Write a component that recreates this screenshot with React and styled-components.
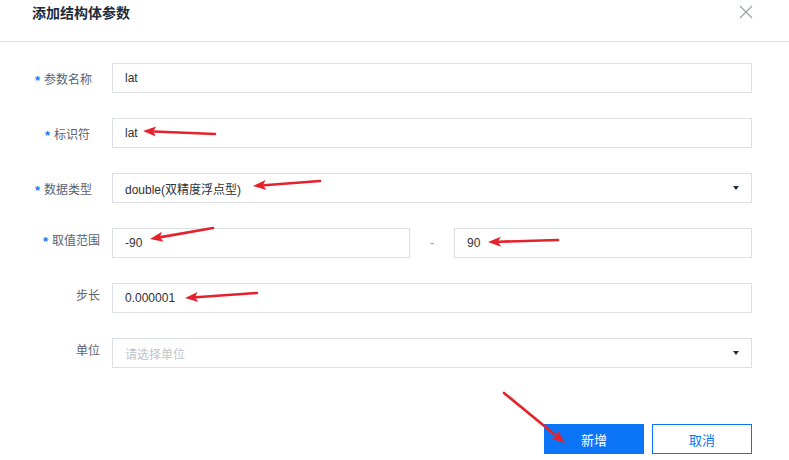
import React from 'react'
import styled, { createGlobalStyle } from 'styled-components'

const Global = createGlobalStyle`
  html, body {
    margin: 0;
    padding: 0;
    background: #fff;
  }
  body {
    font-family: "Liberation Sans", "Noto Sans CJK SC", sans-serif;
  }
`

const Dialog = styled.div`
  position: relative;
  width: 789px;
  height: 460px;
  background: #fff;
  overflow: hidden;
`

const Header = styled.div`
  height: 41px;
  border-bottom: 1px solid #dcdfe6;
  display: flex;
  align-items: flex-start;
  justify-content: space-between;
  padding: 0 37px 0 32px;
`

const Title = styled.div`
  font-size: 14px;
  font-weight: bold;
  color: #1f2d3d;
  line-height: 14px;
  margin-top: 6px;
`

const Close = styled.div`
  width: 14px;
  height: 14px;
  margin-top: 5px;
  margin-right: -1px;
`

const Form = styled.div`
  padding: 21px 37px 0 0;
  display: flex;
  flex-direction: column;
  gap: 25px;
`

const Row = styled.div`
  display: flex;
  align-items: center;
  height: 30px;
`

const Label = styled.div`
  width: 112px;
  box-sizing: border-box;
  padding-right: ${p => p.$pr}px;
  padding-bottom: ${p => p.$up}px;
  display: flex;
  justify-content: flex-end;
  align-items: center;
  font-size: 12px;
  color: #5b6270;
  flex-shrink: 0;
`

const Star = styled.span`
  color: #1677ff;
  font-size: 13px;
  font-weight: bold;
  margin-right: 4px;
  position: relative;
  top: 2px;
`

const Field = styled.div`
  flex: 1;
  height: 30px;
  box-sizing: border-box;
  border: 1px solid #dcdfe6;
  display: flex;
  align-items: center;
  justify-content: space-between;
  padding: 0 11px 0 12px;
  font-size: 12px;
  color: ${p => (p.$placeholder ? '#c0c4cc' : '#303133')};
`

const Dash = styled.div`
  width: 44px;
  text-align: center;
  font-size: 12px;
  color: #8a8f99;
`

const Caret = styled.span`
  width: 0;
  height: 0;
  border-left: 3.5px solid transparent;
  border-right: 3.5px solid transparent;
  border-top: 4px solid #1f2d3d;
  margin-right: 1px;
`

const Footer = styled.div`
  display: flex;
  justify-content: flex-end;
  gap: 8px;
  padding: 56px 37px 0 0;
`

const Button = styled.div`
  width: 100px;
  height: 30px;
  box-sizing: border-box;
  display: flex;
  align-items: center;
  justify-content: center;
  font-size: 13px;
  background: ${p => (p.$primary ? '#0b74f7' : '#fff')};
  color: ${p => (p.$primary ? '#fff' : '#0b74f7')};
  border: 1.5px solid #0b74f7;
`

const Overlay = styled.svg`
  position: absolute;
  left: 0;
  top: 0;
  pointer-events: none;
`

const arrows = [
  [215, 134, 143, 131],
  [320, 181, 253, 186],
  [213, 228, 150, 239],
  [558, 240, 488, 242],
  [257, 293, 185, 298],
  [504, 393, 565, 443],
]

function Arrow({ x1, y1, x2, y2 }) {
  const dx = x2 - x1
  const dy = y2 - y1
  const len = Math.sqrt(dx * dx + dy * dy)
  const ux = dx / len
  const uy = dy / len
  const bx = x2 - ux * 13
  const by = y2 - uy * 13
  const px = -uy * 5
  const py = ux * 5
  return (
    <g>
      <line x1={x1} y1={y1} x2={bx + ux * 2} y2={by + uy * 2} stroke="#e5222c" strokeWidth="2.6" strokeLinecap="round" />
      <polygon points={`${x2},${y2} ${bx + px},${by + py} ${bx + ux * 3},${by + uy * 3} ${bx - px},${by - py}`} fill="#e5222c" />
    </g>
  )
}

const rows = [
  { label: '参数名称', req: true, pr: 20, up: 0, value: 'lat' },
  { label: '标识符', req: true, pr: 22, up: 0, value: 'lat' },
  { label: '数据类型', req: true, pr: 20, up: 0, value: 'double(双精度浮点型)', select: true },
]

export default function App() {
  return (
    <Dialog>
      <Global />
      <Header>
        <Title>添加结构体参数</Title>
        <Close>
          <svg width="14" height="14" viewBox="0 0 14 14">
            <path d="M1 1 L13 13 M13 1 L1 13" stroke="#9a9ea6" strokeWidth="1.1" fill="none" />
          </svg>
        </Close>
      </Header>
      <Form>
        {rows.map(r => (
          <Row key={r.label}>
            <Label $pr={r.pr} $up={r.up}>
              {r.req && <Star>*</Star>}
              {r.label}
            </Label>
            <Field>
              {r.value}
              {r.select && <Caret />}
            </Field>
          </Row>
        ))}
        <Row>
          <Label $pr={12} $up={8}>
            <Star>*</Star>
            取值范围
          </Label>
          <Field>-90</Field>
          <Dash>-</Dash>
          <Field>90</Field>
        </Row>
        <Row>
          <Label $pr={12} $up={8}>步长</Label>
          <Field>0.000001</Field>
        </Row>
        <Row>
          <Label $pr={12} $up={8}>单位</Label>
          <Field $placeholder>
            请选择单位
            <Caret />
          </Field>
        </Row>
      </Form>
      <Footer>
        <Button $primary>新增</Button>
        <Button>取消</Button>
      </Footer>
      <Overlay width="789" height="460">
        {arrows.map(([x1, y1, x2, y2], i) => (
          <Arrow key={i} x1={x1} y1={y1} x2={x2} y2={y2} />
        ))}
      </Overlay>
    </Dialog>
  )
}
